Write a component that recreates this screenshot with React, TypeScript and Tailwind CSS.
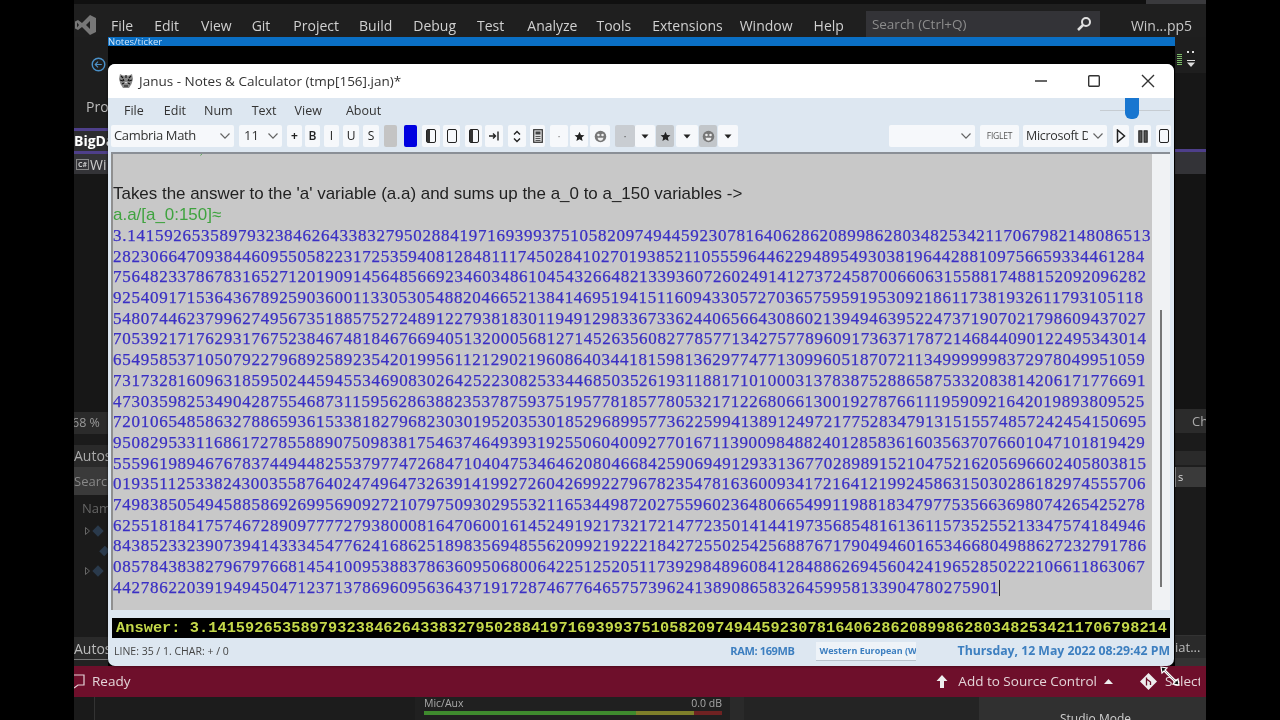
import React from "react";

const digits = [
  "3.141592653589793238462643383279502884197169399375105820974944592307816406286208998628034825342117067982148086513",
  "2823066470938446095505822317253594081284811174502841027019385211055596446229489549303819644288109756659334461284",
  "7564823378678316527120190914564856692346034861045432664821339360726024914127372458700660631558817488152092096282",
  "9254091715364367892590360011330530548820466521384146951941511609433057270365759591953092186117381932611793105118",
  "5480744623799627495673518857527248912279381830119491298336733624406566430860213949463952247371907021798609437027",
  "7053921717629317675238467481846766940513200056812714526356082778577134275778960917363717872146844090122495343014",
  "6549585371050792279689258923542019956112129021960864034418159813629774771309960518707211349999998372978049951059",
  "7317328160963185950244594553469083026425223082533446850352619311881710100031378387528865875332083814206171776691",
  "4730359825349042875546873115956286388235378759375195778185778053217122680661300192787661119590921642019893809525",
  "7201065485863278865936153381827968230301952035301852968995773622599413891249721775283479131515574857242454150695",
  "9508295331168617278558890750983817546374649393192550604009277016711390098488240128583616035637076601047101819429",
  "5559619894676783744944825537977472684710404753464620804668425906949129331367702898915210475216205696602405803815",
  "0193511253382430035587640247496473263914199272604269922796782354781636009341721641219924586315030286182974555706",
  "7498385054945885869269956909272107975093029553211653449872027559602364806654991198818347977535663698074265425278",
  "6255181841757467289097777279380008164706001614524919217321721477235014144197356854816136115735255213347574184946",
  "8438523323907394143334547762416862518983569485562099219222184272550254256887671790494601653466804988627232791786",
  "0857843838279679766814541009538837863609506800642251252051173929848960841284886269456042419652850222106611863067",
  "442786220391949450471237137869609563643719172874677646575739624138908658326459958133904780275901",
];

function Box({ className = "", children }: { className?: string; children?: React.ReactNode }) {
  return <div className={"h-[22px] flex items-center justify-center bg-[#f6f8fb] rounded-[2px] text-[#222] shrink-0 " + className}>{children}</div>;
}

function Chevron() {
  return (
    <svg width="12" height="8" viewBox="0 0 12 8" className="shrink-0">
      <path d="M1.5 1.5 6 6.2l4.5-4.7" fill="none" stroke="#666" strokeWidth="1.2" />
    </svg>
  );
}

function Caret() {
  return (
    <svg width="8" height="5" viewBox="0 0 8 5" className="shrink-0">
      <path d="M0.5 0.5h7L4 4.5z" fill="#222" />
    </svg>
  );
}

function Rounded({ inner = false }: { inner?: boolean }) {
  return <div className="w-[10px] h-[14px] border-[1.5px] border-[#222] rounded-[2px] flex items-stretch justify-start">{inner ? <div className="w-[3px] bg-[#333]" /> : null}</div>;
}

function Star() {
  return (
    <svg width="11" height="11" viewBox="0 0 24 24">
      <path d="M12 1.5l3.2 7 7.6.8-5.7 5.1 1.6 7.5L12 18l-6.7 3.9 1.6-7.5L1.2 9.3l7.6-.8z" fill="#222" />
    </svg>
  );
}

function Face() {
  return (
    <svg width="13" height="13" viewBox="0 0 14 14">
      <circle cx="7" cy="7" r="6.2" fill="#777" />
      <circle cx="4.8" cy="5.4" r="1.4" fill="#eee" />
      <circle cx="9.2" cy="5.4" r="1.4" fill="#eee" />
      <path d="M3.8 8.4h6.4c-.4 2.2-1.6 3.2-3.2 3.2S4.2 10.6 3.8 8.4z" fill="#eee" />
    </svg>
  );
}

function Toolbar() {
  return (
    <div className="h-[24px] pl-[3px] pr-[3px] flex items-center text-[13px] font-['Open_Sans',sans-serif]">
      <Box className="w-[123px] !justify-between pl-[3px] pr-[3px]">
        <span className="text-[13px] tracking-[-0.35px] text-[#333]">Cambria Math</span>
        <Chevron />
      </Box>
      <Box className="w-[43px] ml-[5px] !justify-between pl-[5px] pr-[3px]">
        <span className="text-[#333]">11</span>
        <Chevron />
      </Box>
      <Box className="w-[15px] ml-[5px] text-[12px] font-bold">+</Box>
      <Box className="w-[15px] ml-[3px] text-[12px] font-semibold">B</Box>
      <Box className="w-[15px] ml-[4px] text-[12px]">I</Box>
      <Box className="w-[16px] ml-[4px] text-[12px]">U</Box>
      <Box className="w-[16px] ml-[4px] text-[12px]">S</Box>
      <Box className="w-[13px] ml-[5px] !bg-[#c4c4c4]" />
      <Box className="w-[13px] ml-[7px] !bg-[#0000e0]" />
      <Box className="w-[18px] ml-[5px]"><Rounded inner /></Box>
      <Box className="w-[17px] ml-[3px]"><Rounded /></Box>
      <Box className="w-[17px] ml-[5px]"><Rounded inner /></Box>
      <Box className="w-[18px] ml-[3px]">
        <svg width="12" height="12" viewBox="0 0 12 12"><path d="M1 6h6M5 3.500 7.500 6 5 8.500M10 1.500v9" fill="none" stroke="#222" strokeWidth="1.400" /></svg>
      </Box>
      <Box className="w-[18px] ml-[5px]">
        <svg width="8" height="13" viewBox="0 0 8 13"><path d="M1 4.500 4 1.500l3 3M1 8.500l3 3 3-3" fill="none" stroke="#222" strokeWidth="1.400" /></svg>
      </Box>
      <Box className="w-[15px] ml-[4px]">
        <svg width="10" height="14" viewBox="0 0 10 14"><rect x="0.700" y="0.700" width="8.600" height="12.600" fill="#ddd" stroke="#333" strokeWidth="1.200" /><rect x="2.500" y="2.500" width="5" height="3" fill="#444" /><path d="M2.500 7.500h5M2.500 9.500h5M2.500 11.500h5" stroke="#555" /></svg>
      </Box>
      <Box className="w-[18px] ml-[5px] text-[10px] text-[#777]">·</Box>
      <Box className="w-[18px] ml-[2px]"><Star /></Box>
      <Box className="w-[20px] ml-[2px]"><Face /></Box>
      <Box className="w-[20px] ml-[5px] !bg-[#c9cdd2] text-[10px] text-[#555]">·</Box>
      <Box className="w-[20px]"><Caret /></Box>
      <Box className="w-[18px] ml-[1px] !bg-[#c2c6ca]"><Star /></Box>
      <Box className="w-[22px] ml-[2px]"><Caret /></Box>
      <Box className="w-[18px] ml-[1px] !bg-[#c2c6ca]"><Face /></Box>
      <Box className="w-[20px] ml-[1px]"><Caret /></Box>
      <div className="flex-1" />
      <Box className="w-[86px] !justify-end pr-[3px]"><Chevron /></Box>
      <Box className="w-[39px] ml-[5px] text-[8.500px] text-[#555] tracking-[-0.200px]">FIGLET</Box>
      <Box className="w-[84px] ml-[4px] !justify-between pl-[3px] pr-[3px] overflow-hidden">
        <span className="text-[12.500px] tracking-[-0.300px] text-[#333] whitespace-nowrap w-[62px] overflow-hidden">Microsoft Detect</span>
        <Chevron />
      </Box>
      <Box className="w-[16px] ml-[6px]">
        <svg width="10" height="14" viewBox="0 0 10 14"><path d="M1.500 1v12l7-6z" fill="none" stroke="#222" strokeWidth="1.500" /></svg>
      </Box>
      <Box className="w-[17px] ml-[5px]">
        <svg width="10" height="13" viewBox="0 0 10 13"><rect x="0.800" y="0.800" width="3.200" height="11.400" fill="#555" stroke="#222" /><rect x="6" y="0.800" width="3.200" height="11.400" fill="#555" stroke="#222" /></svg>
      </Box>
      <Box className="w-[15px] ml-[5px]"><Rounded /></Box>
    </div>
  );
}

function JanusIcon() {
  return (
    <svg width="18" height="18" viewBox="0 0 18 18" className="shrink-0">
      <path d="M3 2l3 1.500h6L15 2l1 5-1.500 5L12 16H6l-2.500-4L2 7z" fill="#888" />
      <path d="M4 4l2 2M14 4l-2 2M3 8l3 1M15 8l-3 1M5 12l2-1M13 12l-2-1M9 3v3M7 14h4M6 7l1 2M12 7l-1 2" stroke="#111" strokeWidth="1.100" />
      <path d="M8 10h2l-1 1.500z" fill="#fff" />
    </svg>
  );
}

function JanusWindow() {
  return (
    <div className="absolute left-[34px] top-[27px] w-[1066px] h-[602px] rounded-[7px] overflow-hidden bg-[#dde7f1] flex flex-col shadow-[0_0_3px_rgba(0,0,0,0.6)]">
      <div className="h-[34px] bg-white flex items-center pl-[9px] shrink-0">
        <JanusIcon />
        <span className="ml-[4px] text-[13.500px] text-[#333] font-['Open_Sans',sans-serif]">Janus - Notes &amp; Calculator (tmp[156].jan)*</span>
        <div className="flex-1" />
        <svg width="14" height="14" viewBox="0 0 14 14" className="mr-[39px]"><path d="M1 7h12" stroke="#333" strokeWidth="1.300" /></svg>
        <svg width="14" height="14" viewBox="0 0 14 14" className="mr-[40px]"><rect x="1.700" y="1.700" width="10.600" height="10.600" rx="1" fill="none" stroke="#333" strokeWidth="1.400" /></svg>
        <svg width="14" height="14" viewBox="0 0 14 14" className="mr-[19px]"><path d="M1 1l12 12M13 1 1 13" stroke="#333" strokeWidth="1.400" /></svg>
      </div>
      <div className="h-[26px] flex items-center shrink-0 relative font-['Open_Sans',sans-serif] text-[12.500px] text-[#333]">
        <span className="ml-[16px]">File</span>
        <span className="ml-[20px]">Edit</span>
        <span className="ml-[18px]">Num</span>
        <span className="ml-[19px]">Text</span>
        <span className="ml-[18px]">View</span>
        <span className="ml-[24px]">About</span>
        <div className="absolute left-[992px] top-[12px] w-[70px] h-[1px] bg-[#c6ccd2]" />
        <div className="absolute left-[1017px] top-0 w-[14px] h-[21px] bg-[#1876d0] rounded-b-[6px]" />
      </div>
      <Toolbar />
      <div className="h-[4px] shrink-0" />
      <div className="ml-[3px] mr-[4px] h-[458px] flex shrink-0 border-t-2 border-[#8a8f96]">
        <div className="w-[1041px] bg-[#c8c8c8] border-l-2 border-[#8f8f8f] overflow-hidden shrink-0 flex flex-col">
          <div className="h-[6px] overflow-hidden text-[14px] leading-[4px] text-[#3fa33f] font-['Liberation_Serif',serif] tracking-[0.500px] pl-[1px] whitespace-pre">
            <div className="-mt-[6px]">3 = 428888 2!,18888</div>
          </div>
          <div className="h-[23px]" />
          <div className="h-[21px] leading-[21px] text-[16.950px] text-[#222] font-['Liberation_Sans',sans-serif] whitespace-nowrap">
            Takes the answer to the 'a' variable (a.a) and sums up the a_0 to a_150 variables -&gt;
          </div>
          <div className="h-[22px] leading-[21px] text-[16.950px] text-[#3fa33f] font-['Liberation_Sans',sans-serif] whitespace-nowrap">a.a/[a_0:150]≈</div>
          <div className="font-['Liberation_Serif',serif] text-[17px] leading-[20.700px] tracking-[0.730px] text-[#3a2fc4] [-webkit-text-stroke:0.25px_#3a2fc4] whitespace-nowrap">
            {digits.map((d, i) => (
              <div key={i} className="h-[20.700px]">
                {d}
                {i === digits.length - 1 ? <span className="inline-block w-[1px] h-[16px] bg-[#222] align-[-3px]" /> : null}
              </div>
            ))}
          </div>
        </div>
        <div className="flex-1 bg-[#f0f2f4] flex justify-center pt-[156px]">
          <div className="w-[2px] h-[277px] bg-[#777]" />
        </div>
      </div>
      <div className="h-[8px] shrink-0" />
      <div className="mx-[4px] h-[20px] bg-black shrink-0 pl-[4px] overflow-hidden text-[15.300px] font-bold leading-[20px] tracking-[0.040px] text-[#c4d84a] font-['Liberation_Mono',monospace] whitespace-pre">
        Answer: 3.14159265358979323846264338327950288419716939937510582097494459230781640628620899862803482534211706798214
      </div>
      <div className="flex-1 flex items-center pl-[6px] pb-[1px] font-['Open_Sans',sans-serif]">
        <span className="text-[10.500px] text-[#444]">LINE: 35 / 1. CHAR: + / 0</span>
        <div className="flex-1" />
        <span className="text-[11px] font-bold text-[#3d7fc0] tracking-[-0.350px]">RAM: 169MB</span>
        <div className="ml-[21px] w-[100px] h-[19px] flex items-center pl-[4px] text-[9px] font-bold text-[#3d7fc0] bg-[#eef3f8] border-b border-[#b9c3cd] overflow-hidden whitespace-nowrap">Western European (Windows)</div>
        <span className="ml-[42px] mr-[4px] text-[12.300px] font-bold text-[#3d7fc0] tracking-[-0.030px] whitespace-nowrap">Thursday, 12 May 2022 08:29:42 PM</span>
      </div>
    </div>
  );
}

function Tree() {
  return (
    <>
      <svg width="5" height="8" viewBox="0 0 5 8"><path d="M.5.500 4.500 4l-4 3.500z" fill="none" stroke="#666" /></svg>
      <div className="w-[8px] h-[8px] rotate-45 bg-[#2a3a4c]" />
    </>
  );
}

function LeftRail() {
  return (
    <div className="w-[34px] shrink-0 bg-[#1e1e1e] text-[#bdbdbd] text-[14px] font-['Open_Sans',sans-serif] overflow-hidden flex flex-col whitespace-nowrap">
      <div className="h-[9px]" />
      <div className="h-[26px] pl-[17px] flex items-end">
        <svg width="15" height="15" viewBox="0 0 16 16"><circle cx="8" cy="8" r="6.700" fill="none" stroke="#4a90c8" strokeWidth="1.500" /><path d="M11.500 8h-7M7.500 5 4.500 8l3 3" fill="none" stroke="#4a90c8" strokeWidth="1.200" /></svg>
      </div>
      <div className="h-[56px] pl-[12px] flex items-center pt-[13px]">Pro</div>
      <div className="h-[3px] bg-[#4e3f8a]" />
      <div className="h-[20px] bg-[#2d2d30] text-white font-bold leading-[20px]">BigDa</div>
      <div className="h-[3px] bg-[#4e3f8a]" />
      <div className="h-[20px] bg-[#333337] flex items-center pl-[2px] text-[#ccc]">
        <span className="w-[13px] h-[11px] border border-[#888] text-[7px] leading-[9px] text-center font-bold">C#</span>
        <span className="ml-[1px]">Wi</span>
      </div>
      <div className="h-[238px] bg-[#171717]" />
      <div className="h-[22px] bg-[#2b2b2b] text-[12.500px] leading-[22px] -indent-[2px] text-[#999]">68 %</div>
      <div className="h-[11px] bg-[#1b1b1b]" />
      <div className="h-[22px] leading-[22px] bg-[#2a2a2a] text-[#aaa]">Autos</div>
      <div className="h-[28px] leading-[28px] bg-[#3a3a3a] text-[#888] text-[13px]">Search</div>
      <div className="h-[26px] leading-[26px] pl-[8px] bg-[#1b1b1b] text-[#666] text-[13px]">Name</div>
      <div className="h-[20px] pl-[11px] bg-[#1b1b1b] flex items-center gap-[4px]">
        <Tree />
      </div>
      <div className="h-[20px] bg-[#1b1b1b] flex items-center pl-[27px]">
        <div className="w-[8px] h-[8px] rotate-45 bg-[#2a3a4c]" />
      </div>
      <div className="h-[20px] pl-[11px] bg-[#1b1b1b] flex items-center gap-[4px]">
        <Tree />
      </div>
      <div className="flex-1 bg-[#1b1b1b]" />
      <div className="h-[23px] leading-[23px] bg-[#2a2a2a] text-[#bbb] border-b border-[#777]">Autos</div>
      <div className="h-[6px] bg-[#222]" />
    </div>
  );
}

function RightRail() {
  return (
    <div className="relative w-[31px] shrink-0 bg-[#1e1e1e] text-[#aaa] text-[13px] font-['Open_Sans',sans-serif] overflow-hidden flex flex-col whitespace-nowrap">
      <div className="absolute left-[2px] top-[17px] w-[5px] h-[11px] bg-[repeating-linear-gradient(to_bottom,#7fbf6a_0,#7fbf6a_1px,#1e1e1e_1px,#1e1e1e_2px)]" />
      <div className="h-[16px] flex justify-center items-end gap-[3px] pr-[1px]">
        <div className="w-[2px] h-[2px] bg-[#ddd]" />
        <div className="w-[2px] h-[2px] bg-[#ddd]" />
      </div>
      <div className="h-[20px] flex justify-center items-center">
        <svg width="8" height="7" viewBox="0 0 8 7"><path d="M0 0h8v1H0zM0 2.500h8L4 7z" fill="#ddd" /></svg>
      </div>
      <div className="h-[76px] bg-[#171717]" />
      <div className="h-[3px] bg-[#4e3f8a]" />
      <div className="h-[22px] bg-[#333337]" />
      <div className="h-[235px] bg-[#141414]" />
      <div className="h-[24px] bg-[#2b2b2b] leading-[24px] pl-[17px]">Ch</div>
      <div className="h-[18px] bg-[#1b1b1b]" />
      <div className="h-[14px] bg-[#2a2a2a]" />
      <div className="h-[20px] bg-[#3a3a3a] text-[11px] leading-[20px] text-[#ddd] border-l border-[#888] mt-[2px]">
        <span className="ml-[2px]">s</span>
      </div>
      <div className="flex-1 bg-[#1b1b1b] flex flex-col justify-end">
        <div className="h-[1px] w-full bg-[#333]" />
      </div>
      <div className="h-[22px] bg-[#2a2a2a] leading-[22px] text-[#bbb] text-[13px]">iat...</div>
      <div className="h-[8px] bg-[#333]" />
    </div>
  );
}

export default function App() {
  return (
    <div className="relative w-[1280px] h-[720px] bg-black flex overflow-hidden blur-[0.4px]">
      <div className="w-[74px] shrink-0" />
      <div className="w-[1132px] flex flex-col shrink-0">
        <div className="h-[4px] bg-[#101010] shrink-0 flex justify-end">
          <div className="w-[60px] bg-[#3a3a3d]" />
        </div>
        <div className="h-[33px] bg-[#1f1f1f] flex items-center font-['Open_Sans',sans-serif] text-[14px] text-[#d0d0d0] shrink-0">
          <svg width="24" height="24" viewBox="0 0 24 24" className="ml-[-1px] mr-[14px] mt-[8px] shrink-0">
            <path d="M17 2l6 3v14l-6 3-8-8-4 3-3-1.500v-7L5 7l4 3z M17 8l-4 4 4 4z M4 9.500v5l2-2.500z" fill="#777" fillRule="evenodd" />
          </svg>
          <div className="flex items-center whitespace-nowrap pt-[9px]">
            <span>File</span>
            <span className="ml-[21px]">Edit</span>
            <span className="ml-[22px]">View</span>
            <span className="ml-[20px]">Git</span>
            <span className="ml-[23px]">Project</span>
            <span className="ml-[20px]">Build</span>
            <span className="ml-[21px]">Debug</span>
            <span className="ml-[21px]">Test</span>
            <span className="ml-[23px]">Analyze</span>
            <span className="ml-[19px]">Tools</span>
            <span className="ml-[21px]">Extensions</span>
            <span className="ml-[17px]">Window</span>
            <span className="ml-[21px]">Help</span>
          </div>
          <div className="ml-[22px] w-[234px] h-[26px] bg-[#333337] self-end flex items-center justify-between pl-[6px] pr-[8px] text-[13.500px] text-[#8c8c8c]">
            <span>Search (Ctrl+Q)</span>
            <svg width="16" height="16" viewBox="0 0 16 16"><circle cx="10" cy="6" r="4" fill="none" stroke="#e0e0e0" strokeWidth="2" /><path d="M7 9l-5 5" stroke="#e0e0e0" strokeWidth="2.500" /></svg>
          </div>
          <span className="ml-[31px] pt-[9px] text-[14px] text-[#c8c8c8] whitespace-nowrap">Win...pp5</span>
        </div>
        <div className="flex-1 flex relative min-h-0">
          <LeftRail />
          <div className="flex-1 flex flex-col min-w-0 bg-black">
            <div className="h-[9px] bg-[#0a6fc4] relative text-[9.500px] leading-[9px] text-[#cfe6fa] font-['Open_Sans',sans-serif] whitespace-nowrap">Notes/ticker</div>
          </div>
          <RightRail />
          <JanusWindow />
        </div>
        <div className="h-[31px] bg-[#6e0f2b] flex items-center pr-[6px] text-[13.500px] text-[#e4d4d8] font-['Open_Sans',sans-serif] shrink-0 overflow-hidden whitespace-nowrap">
          <svg width="11" height="15" viewBox="0 0 11 15" className="shrink-0">
            <path d="M0 1h10v10H4l-4 3" fill="none" stroke="#e4d4d8" strokeWidth="1.200" />
          </svg>
          <span className="ml-[7px]">Ready</span>
          <div className="flex-1" />
          <svg width="14" height="15" viewBox="0 0 14 15"><path d="M7 1 1.500 7H5v7h4V7h3.500z" fill="#eee" /></svg>
          <span className="ml-[9px]">Add to Source Control</span>
          <svg width="9" height="5" viewBox="0 0 9 5" className="ml-[7px]"><path d="M4.500 0 9 5H0z" fill="#eee" /></svg>
          <svg width="17" height="17" viewBox="0 0 17 17" className="ml-[27px]"><path d="M8.500 0 17 8.500 8.500 17 0 8.500z" fill="#eee" /><path d="M6.500 4.500v8M6.500 6l4 3v3" stroke="#6e0f2b" strokeWidth="1.300" fill="none" /></svg>
          <span className="ml-[8px] w-[35px] overflow-hidden shrink-0">Select Repository</span>
        </div>
        <div className="h-[23px] shrink-0 bg-[#1c1c1c] flex font-['Open_Sans',sans-serif] text-[#a8a8a8] text-[10.500px] overflow-hidden">
          <div className="w-[20px] bg-[#1a1a1a]" />
          <div className="w-[321px] border-l border-[#333]" />
          <div className="w-[315px] pl-[9px] pr-[8px] bg-[#202020] flex flex-col">
            <div className="flex justify-between leading-[13px]">
              <span>Mic/Aux</span>
              <span>0.0 dB</span>
            </div>
            <div className="mt-[1px] h-[4px] flex">
              <div className="w-[212px] bg-[#3f8a2e]" />
              <div className="w-[58px] bg-[#7f7f2a]" />
              <div className="flex-1 bg-[#6f2222]" />
            </div>
          </div>
          <div className="w-[14px] bg-[#2a2a2a]" />
          <div className="w-[235px] bg-[#242424]" />
          <div className="flex-1 bg-[#303030] pt-[13px] pl-[81px] text-[12px] text-[#d0d0d0] whitespace-nowrap">Studio Mode</div>
        </div>
      </div>
      <div className="w-[74px] shrink-0" />
      <svg width="24" height="24" viewBox="0 0 24 24" className="absolute left-[1158px] top-[664px]">
        <path d="M3 3l6 1-2 2 11 11 2-2 1 6-6-1 2-2L6 7 4 9z" fill="#111" stroke="#fff" strokeWidth="1.200" />
      </svg>
    </div>
  );
}
